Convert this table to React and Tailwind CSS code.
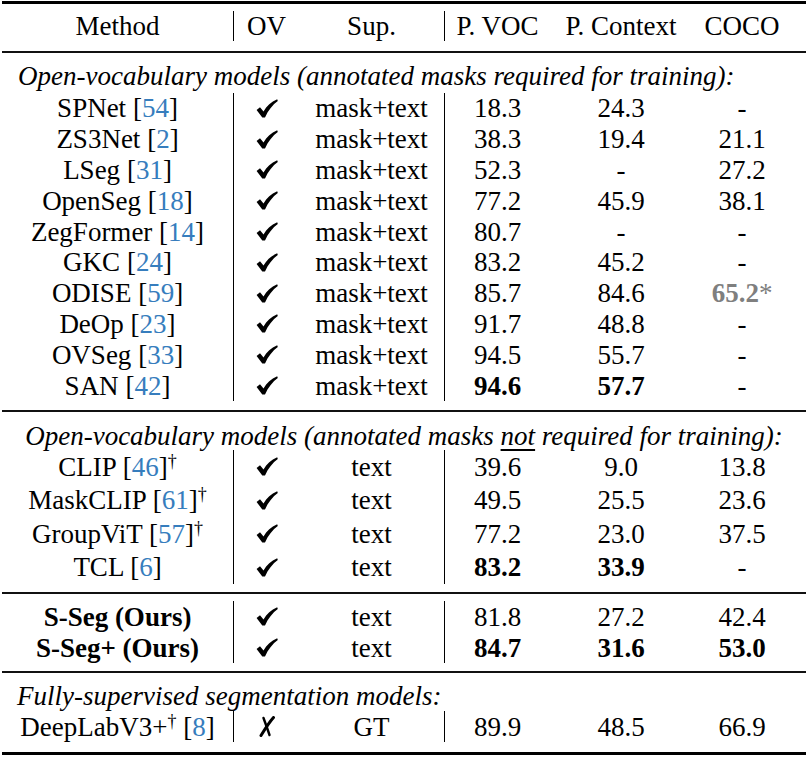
function Check() {
  return (
    <svg width="22" height="19" viewBox="0 0 22 19" className="inline-block">
      <path d="M0.6 10.9 L4 8.3 L7.5 12.4 C10.8 7 15 2.9 21.2 0.3 L21.8 1.9 C16.8 5.6 12.2 11 9 18.5 L6.3 18.5 Z" fill="#000" />
    </svg>
  );
}

function Cross() {
  return (
    <svg width="16" height="21" viewBox="0 0 16 21" className="inline-block">
      <path d="M2 19.5 C6 13 10 6.5 14.5 1.5" stroke="#000" strokeWidth="3" strokeLinecap="round" fill="none" />
      <path d="M4.5 2 C6.5 7.5 8.5 13 10.5 19" stroke="#000" strokeWidth="2.4" strokeLinecap="round" fill="none" />
    </svg>
  );
}

function Cite({ n }) {
  return (
    <>
      [<span className="text-[#367dbd]">{n}</span>]
    </>
  );
}

function Dag() {
  return <sup className="text-[18px] -top-[9px]">†</sup>;
}

function Row({ h, method, ov, sup, voc, ctx, coco }) {
  return (
    <div className={"flex items-center " + h}>
      <div className="w-[231px] h-full flex items-center justify-center whitespace-nowrap">{method}</div>
      <div className="w-[66px] h-full flex items-center justify-center border-l-[1.5px] border-black">{ov}</div>
      <div className="w-[145px] h-full flex items-center justify-center">{sup}</div>
      <div className="w-[106px] h-full flex items-center justify-center border-l-[1.5px] border-black">{voc}</div>
      <div className="w-[142px] h-full flex items-center justify-center">{ctx}</div>
      <div className="w-[100px] h-full flex items-center justify-center">{coco}</div>
    </div>
  );
}

const sec1 = [
  ["SPNet", "54", "18.3", "24.3", "-"],
  ["ZS3Net", "2", "38.3", "19.4", "21.1"],
  ["LSeg", "31", "52.3", "-", "27.2"],
  ["OpenSeg", "18", "77.2", "45.9", "38.1"],
  ["ZegFormer", "14", "80.7", "-", "-"],
  ["GKC", "24", "83.2", "45.2", "-"],
  ["ODISE", "59", "85.7", "84.6", "odise"],
  ["DeOp", "23", "91.7", "48.8", "-"],
  ["OVSeg", "33", "94.5", "55.7", "-"],
  ["SAN", "42", "b94.6", "b57.7", "-"],
];

const sec2 = [
  ["CLIP", "46", true, "39.6", "9.0", "13.8"],
  ["MaskCLIP", "61", true, "49.5", "25.5", "23.6"],
  ["GroupViT", "57", true, "77.2", "23.0", "37.5"],
  ["TCL", "6", false, "b83.2", "b33.9", "-"],
];

function Val({ v }) {
  if (v === "odise")
    return (
      <span className="text-[#7f7f7f]">
        <b>65.2</b>*
      </span>
    );
  if (v.startsWith("b")) return <b>{v.slice(1)}</b>;
  return <span>{v}</span>;
}

export default function App() {
  return (
    <div className="w-[808px] h-[759px] bg-white px-[2px] pt-[1px] [font-family:Liberation_Serif,Tinos,Times_New_Roman,serif] text-[27px] leading-[30px] text-black">
      <div className="h-[3px] bg-black" />
      <div className="mt-[7px]">
        <Row h="h-[30px]" method="Method" ov="OV" sup="Sup." voc="P. VOC" ctx="P. Context" coco="COCO" />
      </div>
      <div className="mt-[9.5px] h-[2px] bg-[#111]" />
      <div className="mt-[8.5px] h-[30px] flex items-center pl-[16px] italic whitespace-nowrap">
        <span>Open-vocabulary models (annotated masks required for training):</span>
      </div>
      <div className="mt-[2px]">
        {sec1.map((r) => (
          <Row
            key={r[0]}
            h="h-[30.8px]"
            method={<span>{r[0]} <Cite n={r[1]} /></span>}
            ov={<Check />}
            sup="mask+text"
            voc={<Val v={r[2]} />}
            ctx={<Val v={r[3]} />}
            coco={<Val v={r[4]} />}
          />
        ))}
      </div>
      <div className="mt-[9.5px] h-[2px] bg-[#111]" />
      <div className="mt-[9.5px] h-[28px] flex items-center justify-center italic whitespace-nowrap">
        <span>
          Open-vocabulary models (annotated masks <span className="underline underline-offset-[4px] decoration-[1.5px]">not</span> required for training):
        </span>
      </div>
      <div>
        {sec2.map((r) => (
          <Row
            key={r[0]}
            h="h-[33.5px]"
            method={<span>{r[0]} <Cite n={r[1]} />{r[2] && <Dag />}</span>}
            ov={<Check />}
            sup="text"
            voc={<Val v={r[3]} />}
            ctx={<Val v={r[4]} />}
            coco={<Val v={r[5]} />}
          />
        ))}
      </div>
      <div className="mt-[7.7px] h-[2px] bg-[#111]" />
      <div className="mt-[7.8px]">
        <Row h="h-[31px]" method={<b>S-Seg (Ours)</b>} ov={<Check />} sup="text" voc="81.8" ctx="27.2" coco="42.4" />
        <Row h="h-[31px]" method={<b>S-Seg+ (Ours)</b>} ov={<Check />} sup="text" voc={<b>84.7</b>} ctx={<b>31.6</b>} coco={<b>53.0</b>} />
      </div>
      <div className="mt-[7.2px] h-[2px] bg-[#111]" />
      <div className="mt-[9.3px] h-[28px] flex items-center pl-[15px] italic whitespace-nowrap">
        <span>Fully-supervised segmentation models:</span>
      </div>
      <div className="mt-[1.5px]">
        <Row
          h="h-[31px]"
          method={<span>DeepLabV3+<Dag /> <Cite n="8" /></span>}
          ov={<Cross />}
          sup="GT"
          voc="89.9"
          ctx="48.5"
          coco="66.9"
        />
      </div>
      <div className="mt-[9.5px] h-[3px] bg-black" />
    </div>
  );
}
